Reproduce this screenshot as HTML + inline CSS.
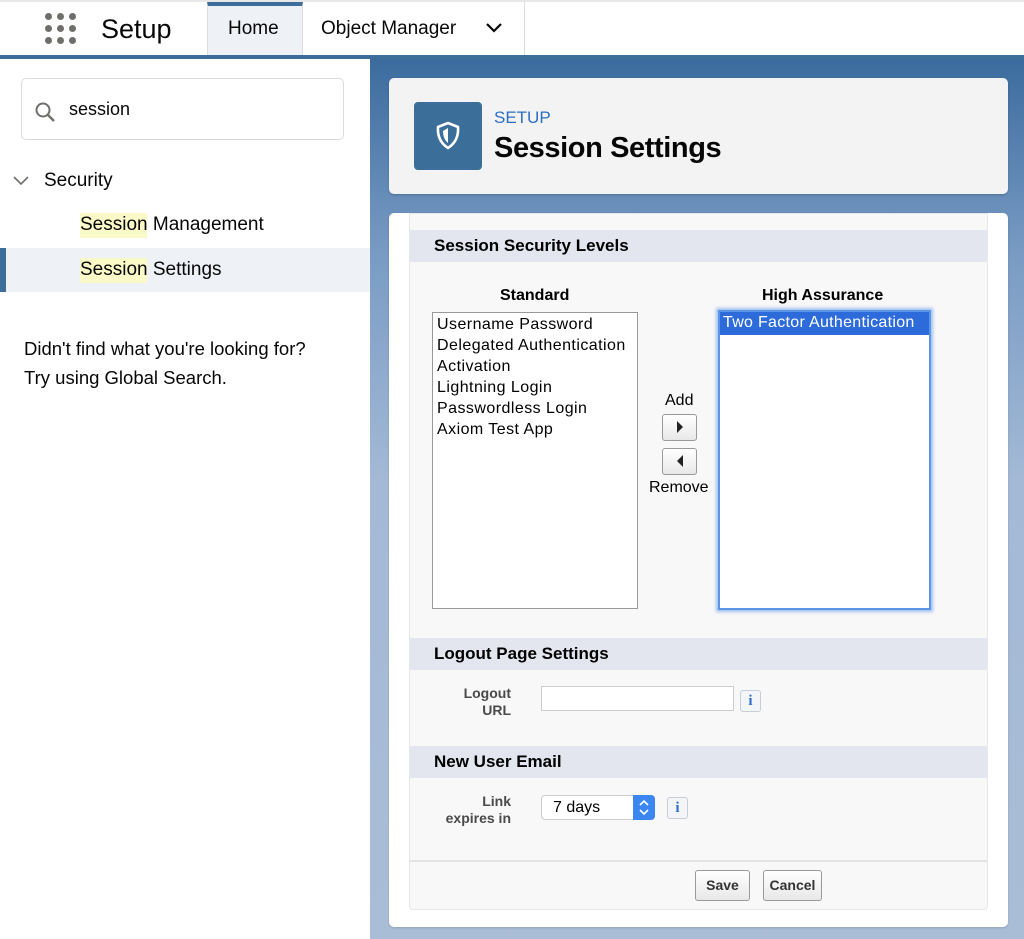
<!DOCTYPE html>
<html><head><meta charset="utf-8"><style>
*{margin:0;padding:0;box-sizing:border-box}
body{width:1024px;height:939px;overflow:hidden;font-family:"Liberation Sans",sans-serif;background:#fff;position:relative;color:#16325c}
.a{position:absolute}
.hdr{left:0;top:0;width:1024px;height:55px;background:#fff;border-top:2px solid #e8e8e8}
.bar{left:0;top:55px;width:1024px;height:4px;background:#3d6e9a}
.dot{position:absolute;width:7px;height:7px;border-radius:50%;background:#706e6b}
.t{color:#080707}
.sec{left:409px;width:579px;height:32px;background:#e3e6ee;font-weight:bold;font-size:17px;color:#000;padding:6px 0 0 25px}
.lab{font-weight:bold;font-size:14px;color:#4a4a4a;text-align:right;line-height:17px}
.btn{border:1px solid #999;border-radius:3px;background:linear-gradient(#fff,#e8e8e8);font-weight:bold;font-size:14px;color:#333;text-align:center}
.info{border:1px solid #c8cdd6;border-radius:3px;background:#f3f5f9;color:#2a6fc9;font-family:"Liberation Serif",serif;font-weight:bold;font-size:15px;text-align:center;line-height:20px}
.li{font-size:16px;color:#000;line-height:21px;letter-spacing:0.45px}
</style></head><body>
<div class="a hdr"></div>
<div class="a" style="left:45px;top:13px;width:32px;height:32px">
<div class="dot" style="left:0;top:0"></div><div class="dot" style="left:12px;top:0"></div><div class="dot" style="left:24px;top:0"></div>
<div class="dot" style="left:0;top:12px"></div><div class="dot" style="left:12px;top:12px"></div><div class="dot" style="left:24px;top:12px"></div>
<div class="dot" style="left:0;top:24px"></div><div class="dot" style="left:12px;top:24px"></div><div class="dot" style="left:24px;top:24px"></div>
</div>
<div class="a t" style="left:101px;top:14px;font-size:27px">Setup</div>
<div class="a" style="left:207px;top:2px;width:96px;height:53px;background:#eef1f6;border-top:4px solid #3d6e9a;border-left:1px solid #ddd;border-right:1px solid #ddd"></div>
<div class="a t" style="left:228px;top:18px;font-size:19px">Home</div>
<div class="a t" style="left:321px;top:18px;font-size:19px">Object Manager</div>
<svg class="a" style="left:485px;top:22px" width="18" height="12"><path d="M2 2 L9 9 L16 2" fill="none" stroke="#080707" stroke-width="2.2"/></svg>
<div class="a" style="left:524px;top:2px;width:1px;height:53px;background:#ddd"></div>
<div class="a bar"></div>

<!-- sidebar -->
<div class="a" style="left:21px;top:78px;width:323px;height:62px;border:1px solid #dddbda;border-radius:5px"></div>
<svg class="a" style="left:34px;top:101px" width="22" height="22"><circle cx="9" cy="9" r="6.5" fill="none" stroke="#706e6b" stroke-width="2"/><path d="M14 14 L20 20" stroke="#706e6b" stroke-width="2.4"/></svg>
<div class="a t" style="left:69px;top:99px;font-size:18px">session</div>
<svg class="a" style="left:13px;top:176px" width="16" height="10"><path d="M1 1 L8 8 L15 1" fill="none" stroke="#706e6b" stroke-width="1.6"/></svg>
<div class="a t" style="left:44px;top:170px;font-size:19px">Security</div>
<div class="a" style="left:80px;top:213px;width:67px;height:25px;background:#fafac8"></div>
<div class="a t" style="left:80px;top:214px;font-size:19px">Session Management</div>
<div class="a" style="left:0;top:248px;width:370px;height:44px;background:#eef1f6"></div>
<div class="a" style="left:0;top:248px;width:6px;height:44px;background:#3d6e9a"></div>
<div class="a" style="left:80px;top:258px;width:67px;height:25px;background:#fafac8"></div>
<div class="a t" style="left:80px;top:259px;font-size:19px">Session Settings</div>
<div class="a t" style="left:24px;top:334px;font-size:18.5px;line-height:29px">Didn't find what you're looking for?<br>Try using Global Search.</div>

<!-- right bg -->
<div class="a" style="left:370px;top:59px;width:654px;height:880px;background:linear-gradient(#3b6b9e 0px,#7a9cc4 200px,#a3b9d6 420px,#aabdd6 880px)"></div>
<div class="a" style="left:389px;top:78px;width:619px;height:116px;background:#f3f3f3;border-radius:5px;box-shadow:0 1px 2px rgba(0,0,0,.2)"></div>
<div class="a" style="left:414px;top:102px;width:68px;height:68px;background:#3b6e98;border-radius:4px"></div>
<svg class="a" style="left:432px;top:119px" width="32" height="34" viewBox="0 0 32 34"><path d="M16 4 L26 8 Q27 22 16 29 Q5 22 6 8 Z" fill="none" stroke="#fff" stroke-width="2.6" stroke-linejoin="round"/><path d="M16 9 L16 24 Q11 20 11 12 Z" fill="#fff"/></svg>
<div class="a" style="left:494px;top:108px;font-size:17px;color:#2b6fc4">SETUP</div>
<div class="a t" style="left:494px;top:132px;font-size:29px;font-weight:bold;letter-spacing:-0.4px">Session Settings</div>

<div class="a" style="left:389px;top:213px;width:619px;height:714px;background:#fff;border-radius:5px;box-shadow:0 1px 2px rgba(0,0,0,.15)"></div>
<div class="a" style="left:409px;top:213px;width:579px;height:697px;background:#f8f8f8;border:1px solid #e6e6e6;border-radius:0 0 4px 4px"></div>

<div class="a sec" style="top:230px">Session Security Levels</div>
<div class="a" style="left:500px;top:287px;font-weight:bold;font-size:16px;color:#000">Standard</div>
<div class="a" style="left:762px;top:287px;font-weight:bold;font-size:16px;color:#000">High Assurance</div>
<div class="a" style="left:432px;top:312px;width:206px;height:297px;background:#fff;border:1px solid #999;padding:1px 0 0 4px;overflow:hidden;white-space:nowrap">
<div class="li">Username Password</div><div class="li">Delegated Authentication</div><div class="li">Activation</div><div class="li">Lightning Login</div><div class="li">Passwordless Login</div><div class="li">Axiom Test App</div>
</div>
<div class="a" style="left:665px;top:392px;font-size:16px;color:#000">Add</div>
<div class="a btn" style="left:662px;top:414px;width:35px;height:27px"></div>
<svg class="a" style="left:675px;top:420px" width="10" height="14"><path d="M2 1 L8 7 L2 13 Z" fill="#222"/></svg>
<div class="a btn" style="left:662px;top:448px;width:35px;height:27px"></div>
<svg class="a" style="left:675px;top:454px" width="10" height="14"><path d="M8 1 L2 7 L8 13 Z" fill="#222"/></svg>
<div class="a" style="left:649px;top:479px;font-size:16px;color:#000">Remove</div>
<div class="a" style="left:718px;top:310px;width:213px;height:300px;background:#fff;border:2px solid #5b95e6;box-shadow:0 0 3px 2px #9fc2f0"></div>
<div class="a" style="left:720px;top:312px;width:209px;height:23px;background:#2c6bd9;color:#fff;font-size:16px;padding:2px 0 0 3px;letter-spacing:0.3px;white-space:nowrap">Two Factor Authentication</div>

<div class="a sec" style="top:638px">Logout Page Settings</div>
<div class="a lab" style="left:430px;top:685px;width:81px">Logout<br>URL</div>
<div class="a" style="left:541px;top:686px;width:193px;height:25px;background:#fff;border:1px solid #ccc"></div>
<div class="a info" style="left:740px;top:690px;width:21px;height:22px">i</div>

<div class="a sec" style="top:746px">New User Email</div>
<div class="a lab" style="left:420px;top:793px;width:91px">Link<br>expires in</div>
<div class="a" style="left:541px;top:795px;width:114px;height:25px;background:#fff;border:1px solid #ccc;border-radius:4px;font-size:16px;color:#000;padding:3px 0 0 11px">7 days</div>
<div class="a" style="left:633px;top:795px;width:22px;height:25px;background:#3b86f0;border-radius:0 4px 4px 0"></div>
<svg class="a" style="left:638px;top:799px" width="12" height="17"><path d="M2 6 L6 2 L10 6 M2 11 L6 15 L10 11" fill="none" stroke="#fff" stroke-width="1.6"/></svg>
<div class="a info" style="left:667px;top:797px;width:21px;height:22px">i</div>

<div class="a" style="left:410px;top:860px;width:577px;height:2px;background:#e3e3e3"></div>
<div class="a btn" style="left:695px;top:870px;width:55px;height:31px;line-height:29px">Save</div>
<div class="a btn" style="left:763px;top:870px;width:59px;height:31px;line-height:29px">Cancel</div>
</body></html>
